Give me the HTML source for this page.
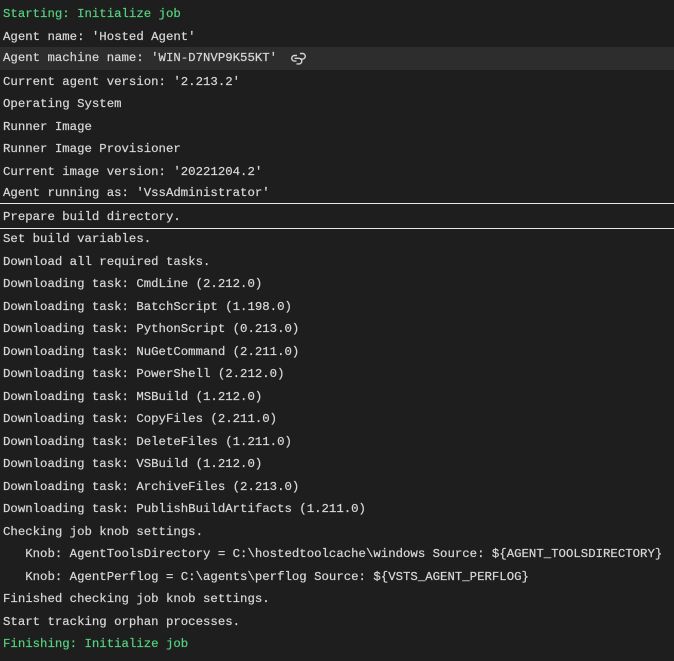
<!DOCTYPE html>
<html><head><meta charset="utf-8"><style>
html,body{margin:0;padding:0;background:#1e1e1e;width:674px;height:661px;overflow:hidden}
#w{position:absolute;left:0;top:1px;width:674px;height:660px}
.l{position:absolute;left:0;width:674px;height:22.5px;line-height:22.5px;padding-left:3px;box-sizing:border-box;font-family:"Liberation Mono",monospace;font-size:12.35px;color:#d8d8d8;white-space:pre;-webkit-text-stroke:0.2px #d8d8d8}
.g{color:#55d27e;-webkit-text-stroke:0.2px #55d27e}
.hl{background:#2d2d2d}
.b{position:absolute;left:0;width:674px;height:1.5px;background:#e8e8e8}
</style></head><body><div id="w">
<div class="l g" style="top:2px">Starting: Initialize job</div>
<div class="l" style="top:24.5px">Agent name: 'Hosted Agent'</div>
<div class="l hl" style="top:46px">Agent machine name: 'WIN-D7NVP9K55KT'<svg style="position:absolute;left:290px;top:5px" width="17" height="13" viewBox="0 0 17 13"><g fill="none" stroke="#d4d4d4" stroke-width="1.4"><path d="M7 3.5H4.5a2.8 2.8 0 0 0 0 5.6H6.5"/><path d="M4.5 6.3h4.5a2.8 2.8 0 0 1 0 5.6H6.5"/><path d="M10 1.5h2.5a2.8 2.8 0 0 1 0 5.6H10"/></g></svg></div>
<div class="l" style="top:69.5px">Current agent version: '2.213.2'</div>
<div class="l" style="top:92px">Operating System</div>
<div class="l" style="top:114.5px">Runner Image</div>
<div class="l" style="top:137px">Runner Image Provisioner</div>
<div class="l" style="top:159.5px">Current image version: '20221204.2'</div>
<div class="l" style="top:181px">Agent running as: 'VssAdministrator'</div>
<div class="b" style="top:201.5px"></div>
<div class="l" style="top:204.5px">Prepare build directory.</div>
<div class="b" style="top:226.5px"></div>
<div class="l" style="top:227px">Set build variables.</div>
<div class="l" style="top:249.5px">Download all required tasks.</div>
<div class="l" style="top:272px">Downloading task: CmdLine (2.212.0)</div>
<div class="l" style="top:294.5px">Downloading task: BatchScript (1.198.0)</div>
<div class="l" style="top:317px">Downloading task: PythonScript (0.213.0)</div>
<div class="l" style="top:339.5px">Downloading task: NuGetCommand (2.211.0)</div>
<div class="l" style="top:362px">Downloading task: PowerShell (2.212.0)</div>
<div class="l" style="top:384.5px">Downloading task: MSBuild (1.212.0)</div>
<div class="l" style="top:407px">Downloading task: CopyFiles (2.211.0)</div>
<div class="l" style="top:429.5px">Downloading task: DeleteFiles (1.211.0)</div>
<div class="l" style="top:452px">Downloading task: VSBuild (1.212.0)</div>
<div class="l" style="top:474.5px">Downloading task: ArchiveFiles (2.213.0)</div>
<div class="l" style="top:497px">Downloading task: PublishBuildArtifacts (1.211.0)</div>
<div class="l" style="top:519.5px">Checking job knob settings.</div>
<div class="l" style="top:542px">   Knob: AgentToolsDirectory = C:\hostedtoolcache\windows Source: ${AGENT_TOOLSDIRECTORY}</div>
<div class="l" style="top:564.5px">   Knob: AgentPerflog = C:\agents\perflog Source: ${VSTS_AGENT_PERFLOG}</div>
<div class="l" style="top:587px">Finished checking job knob settings.</div>
<div class="l" style="top:609.5px">Start tracking orphan processes.</div>
<div class="l g" style="top:632px">Finishing: Initialize job</div>
</div></body></html>
